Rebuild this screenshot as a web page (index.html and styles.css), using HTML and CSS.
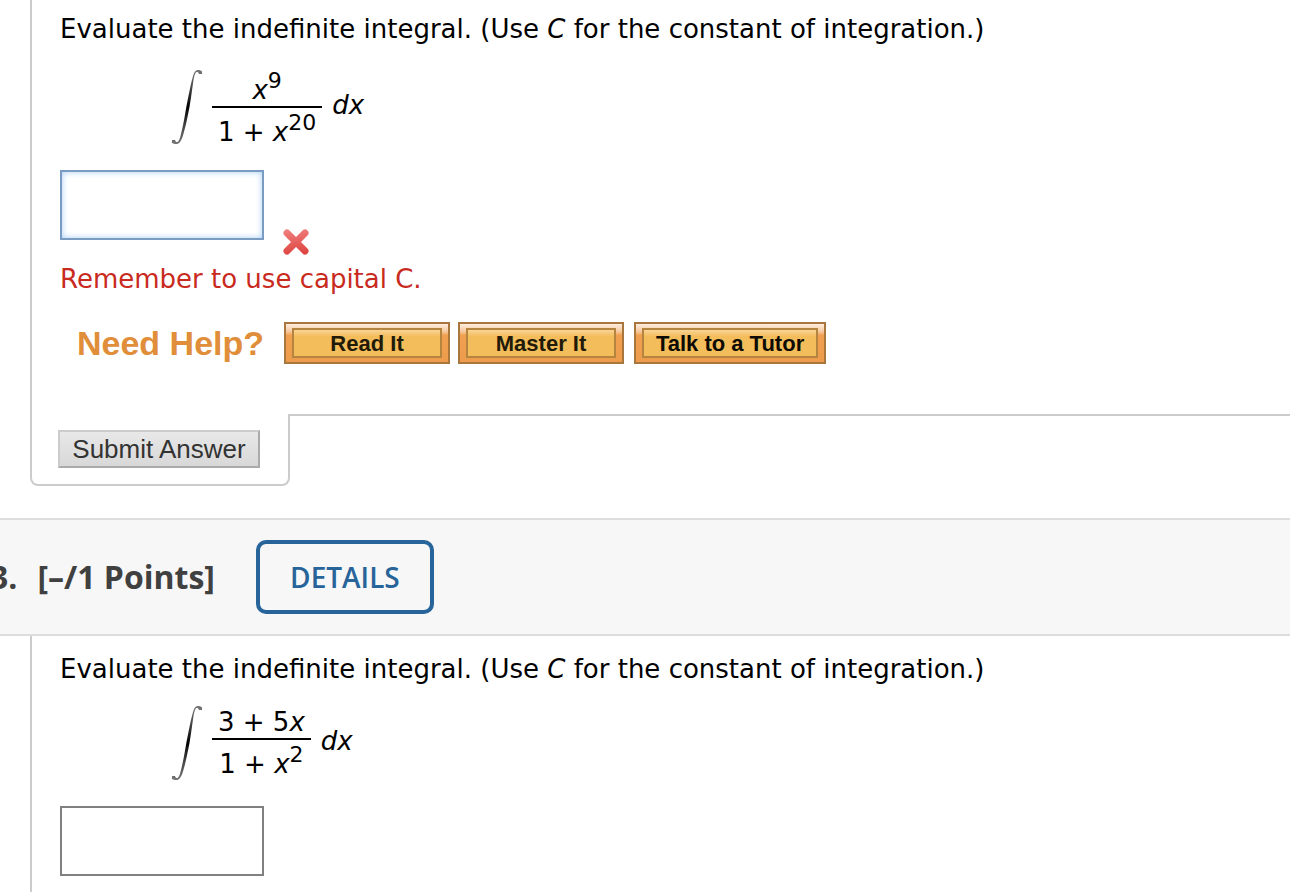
FILE: index.html
```
<!DOCTYPE html>
<html lang="en">
<head>
    <meta charset="UTF-8">
    <meta name="viewport" content="width=device-width, initial-scale=1.0">
    <title>Homework</title>
    <link rel="stylesheet" href="styles.css">
</head>
<body>
    <svg class="defs" width="0" height="0" aria-hidden="true">
        <defs>
            <linearGradient id="fade" x1="0" y1="0" x2="0" y2="1">
                <stop offset="0" stop-color="#777"/>
                <stop offset="0.25" stop-color="#444"/>
                <stop offset="0.5" stop-color="#000"/>
                <stop offset="0.75" stop-color="#444"/>
                <stop offset="1" stop-color="#777"/>
            </linearGradient>
            <linearGradient id="cross" gradientUnits="userSpaceOnUse" x1="0" y1="0" x2="4" y2="28">
                <stop offset="0" stop-color="#f28481"/>
                <stop offset="1" stop-color="#dd4541"/>
            </linearGradient>
            <symbol id="integral" viewBox="0 0 30 74">
                <path fill="url(#fade)" d="M0 70h3c.5 1.500 1 2 2 2 1.500 0 2.500-2 4-8C12 52 13 44 14.500 36 17 24 18 17 20.500 8 22 2 23.500 0 26 0c2 0 3 .5 4 1.500V4h-3c-.5-1.500-1-2-2-2-1.500 0-2.500 2.500-3.500 8C20 20 19 28 17.500 37 15 50 13.500 57 11 65.500 9 72 7 74 4.500 74 2.500 74 1 73.500 0 73z"/>
            </symbol>
        </defs>
    </svg>

    <section class="question">
        <div class="question-body">
            <p>Evaluate the indefinite integral. (Use <i>C</i> for the constant of integration.)</p>
            <div class="formula">
                <svg class="integral" aria-hidden="true"><use href="#integral"/></svg>
                <div class="fraction">
                    <div class="num power"><i>x</i><sup>9</sup></div>
                    <div class="den power">1 + <i>x</i><sup>20</sup></div>
                </div>
                <i class="dx">dx</i>
            </div>
            <div class="answer graded">
                <input type="text" class="answer-box wrong" aria-label="Answer to question 2">
                <svg class="mark" viewBox="0 0 28 28" role="img" aria-label="Incorrect">
                    <path fill="none" stroke="url(#cross)" stroke-width="7" stroke-linecap="round" d="M5 5 23 23M23 5 5 23"/>
                </svg>
            </div>
            <p class="feedback">Remember to use capital C.</p>
            <div class="help">
                <span class="help-label">Need Help?</span>
                <button type="button" class="help-btn"><span>Read It</span></button>
                <button type="button" class="help-btn"><span>Master It</span></button>
                <button type="button" class="help-btn tutor"><span>Talk to a Tutor</span></button>
            </div>
        </div>
        <div class="question-footer">
            <div class="submit-tab">
                <button type="submit" class="submit">Submit Answer</button>
            </div>
            <div class="footer-line"></div>
        </div>
    </section>

    <header class="question-header">
        <h2><span class="number">3.</span>[–/1 Points]</h2>
        <button type="button" class="details">DETAILS</button>
    </header>

    <section class="question">
        <div class="question-body next">
            <p>Evaluate the indefinite integral. (Use <i>C</i> for the constant of integration.)</p>
            <div class="formula">
                <svg class="integral" aria-hidden="true"><use href="#integral"/></svg>
                <div class="fraction">
                    <div class="num">3 + 5<i>x</i></div>
                    <div class="den power">1 + <i>x</i><sup>2</sup></div>
                </div>
                <i class="dx">dx</i>
            </div>
            <div class="answer">
                <input type="text" class="answer-box" aria-label="Answer to question 3">
            </div>
        </div>
    </section>
</body>
</html>
```
FILE: styles.css
```
* {
    margin: 0;
    padding: 0;
    box-sizing: border-box;
}
body {
    font-family: Verdana, 'DejaVu Sans', sans-serif;
    font-size: 26px;
    line-height: 32px;
    color: #000;
    background-color: #fff;
    overflow-x: hidden;
}
.defs {
    position: absolute;
}
.question {
    margin-left: 30px;
}
.question-body {
    border-left: 2px solid #ccc;
    padding: 13px 28px 50px;
}
.question-body.next {
    padding-top: 17px;
    padding-bottom: 16px;
}

/* formula */
.formula {
    display: flex;
    align-items: center;
    gap: 10px;
    margin-top: 21px;
    padding-left: 112px;
}
.integral {
    width: 30px;
    height: 74px;
}
.fraction {
    text-align: center;
}
.num,
.den {
    padding: 0 6px;
}
.power {
    padding-top: 8px;
}
.den {
    border-top: 2px solid #000;
}
sup {
    font-size: 22px;
    line-height: 0;
    vertical-align: 11px;
}
.dx {
    padding-bottom: 4px;
}

/* answer */
.answer {
    display: flex;
    gap: 18px;
    margin-top: 26px;
}
.answer.graded {
    margin-top: 22px;
}
.answer-box {
    width: 204px;
    height: 70px;
    padding: 0 10px;
    border: 2px solid #808080;
    font: inherit;
    outline: none;
}
.answer-box.wrong {
    border-color: #7a9cc2;
    box-shadow: inset 0 0 6px #a9cdf5;
}
.mark {
    width: 28px;
    height: 28px;
    margin-top: 58px;
}
.feedback {
    margin-top: 7px;
    color: #c92a1e;
}

/* help buttons */
.help {
    display: flex;
    align-items: center;
    gap: 8px;
    margin-top: 27px;
    padding-left: 17px;
    font-family: Arial, 'Liberation Sans', sans-serif;
    font-weight: bold;
}
.help-label {
    margin-right: 12px;
    font-size: 34px;
    color: #e08e3a;
}
.help-btn {
    width: 166px;
    height: 42px;
    padding: 4px 6px;
    border: 2px solid #a9773d;
    background: linear-gradient(#fdeee0, #f6c79c 20%, #f0a04e 30%, #ec9c4a);
    font: inherit;
    font-size: 22px;
    color: #221a08;
    cursor: pointer;
}
.help-btn span {
    display: block;
    height: 30px;
    border: 2px solid #b5843f;
    line-height: 28px;
    background: linear-gradient(#f9d496, #f3bd5b 25%);
}
.help-btn.tutor {
    width: 192px;
    margin-left: 2px;
    color: #0d0a03;
}

/* submit */
.question-footer {
    display: flex;
}
.submit-tab {
    width: 260px;
    padding: 16px 26px;
    border: 2px solid #ccc;
    border-top: none;
    border-radius: 0 0 8px 8px;
}
.submit {
    display: block;
    width: 202px;
    height: 38px;
    border: 2px solid;
    border-color: #ccc #aaa #aaa #ccc;
    background: linear-gradient(#e8e8e8, #d8d8d8);
    font: 26px Arial, 'Liberation Sans', sans-serif;
    color: #333;
    cursor: pointer;
}
.footer-line {
    flex: 1;
    border-top: 2px solid #ccc;
}

/* question header */
.question-header {
    display: flex;
    align-items: center;
    gap: 41px;
    margin-top: 32px;
    padding: 20px 0;
    border-top: 2px solid #ddd;
    border-bottom: 2px solid #ddd;
    background-color: #f7f7f7;
    font-family: 'Open Sans', sans-serif;
}
.question-header h2 {
    display: flex;
    gap: 20px;
    margin-left: -10px;
    font-size: 32px;
    color: #404040;
}
.details {
    width: 178px;
    height: 74px;
    border: 4px solid #27649a;
    border-radius: 10px;
    background: none;
    font: 600 28px 'Open Sans', sans-serif;
    color: #27649a;
    cursor: pointer;
}
```
